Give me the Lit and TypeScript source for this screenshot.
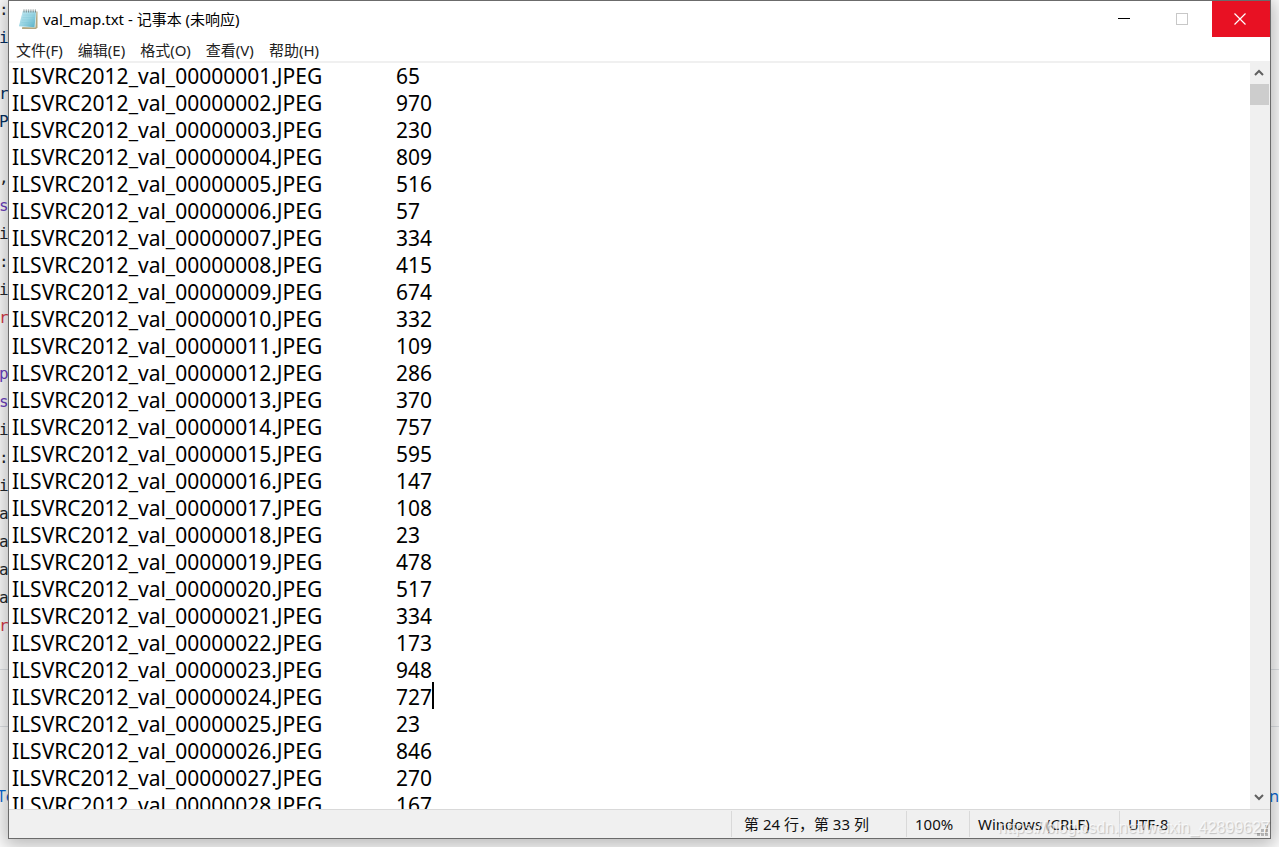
import { LitElement, html, css, svg } from "lit";
import { customElement, property } from "lit/decorators.js";

const LABELS = [
  65, 970, 230, 809, 516, 57, 334, 415, 674, 332, 109, 286, 370, 757,
  595, 147, 108, 23, 478, 517, 334, 173, 948, 727, 23, 846, 270, 167,
];

const DOCUMENT = LABELS.map(
  (label, i) => `ILSVRC2012_val_${String(i + 1).padStart(8, "0")}.JPEG\t${label}`
).join("\n");

const CODE: [string, string][] = [
  [":", "dark"], ["i", "navy"], ["", ""], ["r", "navy"], ["P", "navy"], ["", ""],
  [",", "dark"], ["s", "purple"], ["i", "dark"], [":", "dark"], ["i", "dark"], ["r", "red"],
  ["", ""], ["p", "purple"], ["s", "purple"], ["i", "dark"], [":", "dark"], ["i", "dark"],
  ["a", "dark"], ["a", "dark"], ["a", "dark"], ["a", "dark"], ["r", "red"],
];

/** The web page that lies behind the editor window. */
@customElement("page-behind")
class PageBehind extends LitElement {
  static styles = css`
    :host { display: flex; flex-direction: column; overflow: hidden; background: #fff; }
    pre { margin: 0; height: 669px; font: 16px/28px "DejaVu Sans Mono", monospace; overflow: hidden; }
    .line { height: 28px; margin-left: -1px; }
    .line:first-child { height: 24px; line-height: 20px; }
    .dark { color: #24292e; }
    .navy { color: #032f62; }
    .purple { color: #6f42c1; }
    .red { color: #d73a49; }
    .band { height: 56px; border: solid #e1e4e8; border-width: 1px 0; }
    footer { display: flex; justify-content: space-between; padding-top: 56px; font: 16px/26px "Open Sans", sans-serif; }
    a { color: #0366d6; text-decoration: none; }
    .terms { margin-left: -3px; }
  `;
  render() {
    return html`
      <pre>${CODE.map(([t, c]) => html`<div class="line ${c}">${t}</div>`)}</pre>
      <div class="band"></div>
      <footer><a class="terms" href="#">Te</a><a href="#">n</a></footer>
    `;
  }
}

@customElement("title-bar")
class TitleBar extends LitElement {
  @property() name = "";
  static styles = css`
    :host { display: flex; height: 36px; background: #fff; font: 15px/36px "Noto Sans", "Noto Sans CJK SC", sans-serif; color: #000; }
    .icon { margin: 8px 4px 0 10px; flex: none; }
    .name { flex: 1; margin: 0; font-size: inherit; font-weight: 400; white-space: nowrap; }
    button { width: 58px; height: 36px; padding: 0 3px 0 0; border: 0; background: none; display: grid; place-items: center; }
    .close { padding: 0 2px 0 0; background: #e81123; }
  `;
  render() {
    return html`
      <svg class="icon" width="20" height="20" viewBox="0 0 20 20" aria-hidden="true">
        <defs>
          <linearGradient id="paper" x1="0" y1="0" x2="1" y2="1">
            <stop offset="0" stop-color="#c4e9f2" /><stop offset=".5" stop-color="#9ad5e3" /><stop offset="1" stop-color="#55aec5" />
          </linearGradient>
        </defs>
        <path d="M5 2 18.5 2.5V18.5L17 20H3z" fill="#b3a67f" />
        <path d="M4 1.5 17.5 2 16.5 18.5 0 18z" fill="#dff1f4" />
        <path d="M3.8 2 17 2.5 15.5 18.2 0 17z" fill="url(#paper)" />
        <path d="M4 6h12M3.5 8.5h12M3 11h12M2.5 13.5h12" stroke="#74c2d4" stroke-width=".5" opacity=".5" />
        <path d="M5 .5v3M7.3 .5v3M9.6 .5v3M11.9 .5v3M14.2 .5v3M16.5 .5v3" stroke="#777f80" stroke-width=".9" />
        <path d="M4 1.2h13" stroke="#c9d3d4" stroke-width=".6" />
      </svg>
      <h1 class="name">${this.name}</h1>
      <button aria-label="最小化"><svg width="12" height="12"><path d="M0 5.5h12" stroke="#000" /></svg></button>
      <button aria-label="最大化" disabled><svg width="12" height="12"><rect x=".5" y=".5" width="11" height="11" fill="none" stroke="#c8c8c8" /></svg></button>
      <button class="close" aria-label="关闭"><svg width="12" height="12"><path d="M.5.5l11 11M11.5.5l-11 11" stroke="#fff" stroke-width="1.2" /></svg></button>
    `;
  }
}

@customElement("menu-bar")
class MenuBar extends LitElement {
  static styles = css`
    nav { display: flex; gap: 15px; height: 24px; padding: 0 7px; background: #fff; border-bottom: 2px solid #f0f0f0; }
    button { padding: 0; border: 0; background: none; color: #222; font: 15px/26px "Noto Sans", "Noto Sans CJK SC", sans-serif; white-space: nowrap; }
  `;
  render() {
    return html`<nav>${["文件(F)", "编辑(E)", "格式(O)", "查看(V)", "帮助(H)"].map((m) => html`<button>${m}</button>`)}</nav>`;
  }
}

@customElement("text-editor")
class TextEditor extends LitElement {
  static styles = css`
    :host { display: flex; min-height: 0; background: #fff; }
    .pane { position: relative; flex: 1; overflow: hidden; display: flex; }
    textarea {
      flex: 1; min-width: 0; padding: 0 3px; border: 0; outline: 0; resize: none; overflow: hidden;
      background: none; color: #000; white-space: pre; tab-size: 96px;
      font: 21px/27px "Noto Sans", sans-serif;
    }
    .caret { position: absolute; left: 423px; top: 619px; width: 2px; height: 27px; background: #000; }
    .scroll { width: 20px; display: flex; flex-direction: column; background: #f0f0f0; }
    .scroll button { height: 21px; padding: 0 2px 2px 0; border: 0; background: none; display: grid; place-items: center; }
    .track { flex: 1; }
    .thumb { height: 21px; width: 19px; background: #cdcdcd; }
  `;
  private arrow(points: string) {
    return svg`<polyline points=${points} fill="none" stroke="#606060" stroke-width="2" />`;
  }
  render() {
    return html`
      <div class="pane">
        <textarea aria-label="val_map.txt" spellcheck="false" .value=${DOCUMENT}></textarea>
        <div class="caret"></div>
      </div>
      <div class="scroll">
        <button aria-label="向上"><svg width="10" height="7">${this.arrow("1,6 5,2 9,6")}</svg></button>
        <div class="track"><div class="thumb"></div></div>
        <button aria-label="向下"><svg width="10" height="7">${this.arrow("1,1 5,5 9,1")}</svg></button>
      </div>
    `;
  }
}

@customElement("status-bar")
class StatusBar extends LitElement {
  static styles = css`
    :host { position: relative; display: flex; justify-content: flex-end; height: 29px; padding-top: 1px; box-sizing: border-box; background: #f0f0f0; border-top: 1px solid #d9d9d9; }
    .cell { box-sizing: border-box; height: 26px; padding-left: 8px; border-left: 1px solid #d9d9d9; color: #111; font: 15px/27px "Noto Sans", "Noto Sans CJK SC", sans-serif; white-space: nowrap; }
    .position { width: 175px; padding-left: 12px; }
    .zoom { width: 63px; }
    .ending { width: 150px; }
    .encoding { width: 151px; }
    .mark { position: absolute; right: 0; bottom: 0; font: 16px/20px "Liberation Sans", sans-serif; color: rgba(255, 255, 255, 0.7); text-shadow: 1px 1px 1px rgba(0, 0, 0, 0.2); white-space: nowrap; }
    .grip { position: absolute; right: 2px; bottom: 2px; }
  `;
  render() {
    return html`
      <div class="cell position">第 24 行，第 33 列</div>
      <div class="cell zoom">100%</div>
      <div class="cell ending">Windows (CRLF)</div>
      <div class="cell encoding">UTF-8</div>
      <svg class="grip" width="11" height="11" fill="#b5b5b5" aria-hidden="true">
        <path d="M8 0h3v3h-3zM4 4h3v3h-3zM8 4h3v3h-3zM0 8h3v3h-3zM4 8h3v3h-3zM8 8h3v3h-3z" />
      </svg>
      <div class="mark">https://blog.csdn.net/weixin_42899627</div>
    `;
  }
}

@customElement("app-root")
class AppRoot extends LitElement {
  static styles = css`
    :host { display: grid; grid-template: 100vh / 100%; overflow: hidden; }
    page-behind, .window { grid-area: 1 / 1; }
    .window {
      z-index: 1; display: flex; flex-direction: column; margin: 0 8px 8px; border: 1px solid #6b6b6b;
      background: #fff; box-shadow: 0 3px 18px 4px rgba(0, 0, 0, 0.28);
    }
    text-editor { flex: 1; }
  `;
  render() {
    return html`
      <page-behind></page-behind>
      <main class="window">
        <title-bar name="val_map.txt - 记事本 (未响应)"></title-bar>
        <menu-bar></menu-bar>
        <text-editor></text-editor>
        <status-bar></status-bar>
      </main>
    `;
  }
}
